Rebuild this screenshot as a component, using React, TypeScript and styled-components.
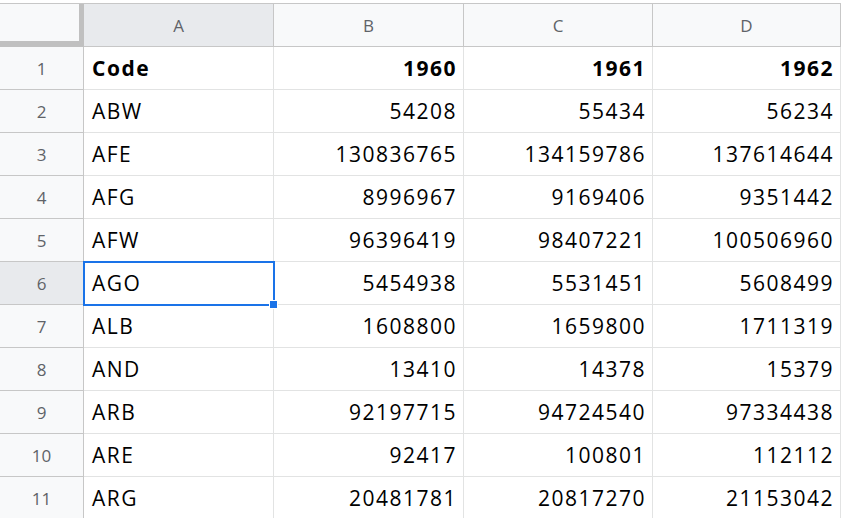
import React from "react";
import styled, { createGlobalStyle } from "styled-components";

const Global = createGlobalStyle`
  body { margin: 0; background: #fff; font-family: "Open Sans", "Noto Sans", sans-serif; }
`;

const Sheet = styled.div`
  margin-top: 3px;
  display: grid;
  grid-template-columns: 84px 190px 190px 189px 188px;
  grid-auto-rows: 43px;
  grid-template-rows: 43px;
  border-top: 1px solid #c7c7c7;
`;

const Corner = styled.div`
  box-sizing: border-box;
  background: #f8f9fa;
  border-right: 5px solid #c0c0c0;
  border-bottom: 6px solid #c0c0c0;
`;

const ColHead = styled.div<{ $sel?: boolean }>`
  box-sizing: border-box;
  background: ${(p) => (p.$sel ? "#e8eaed" : "#f8f9fa")};
  border-right: 1px solid #c7c7c7;
  border-bottom: 1px solid #c7c7c7;
  display: flex;
  align-items: center;
  justify-content: center;
  color: #5f6368;
  font-size: 17px;
`;

const RowHead = styled.div<{ $sel?: boolean }>`
  box-sizing: border-box;
  background: ${(p) => (p.$sel ? "#e8eaed" : "#f8f9fa")};
  border-right: 1px solid #c7c7c7;
  border-bottom: 1px solid #c7c7c7;
  display: flex;
  align-items: center;
  justify-content: center;
  color: #5f6368;
  font-size: 17px;
`;

const Cell = styled.div<{ $num?: boolean; $bold?: boolean; $sel?: boolean }>`
  position: relative;
  box-sizing: border-box;
  border-right: 1px solid #e2e3e3;
  border-bottom: 1px solid #e2e3e3;
  display: flex;
  align-items: center;
  justify-content: ${(p) => (p.$num ? "flex-end" : "flex-start")};
  padding: 0 ${(p) => (p.$num ? "6px" : "0")} 0 ${(p) => (p.$num ? "0" : "8px")};
  font-size: 21px;
  letter-spacing: 1.5px;
  color: #000;
  font-weight: ${(p) => (p.$bold ? 700 : 400)};
  ${(p) => (p.$sel ? "outline: 2px solid #1a73e8; outline-offset: -1px; z-index: 1;" : "")}
`;

const Handle = styled.span`
  position: absolute;
  right: -5px;
  bottom: -5px;
  width: 7px;
  height: 7px;
  background: #1a73e8;
  border: 1px solid #fff;
`;

const rows: [string, string, string, string][] = [
  ["Code", "1960", "1961", "1962"],
  ["ABW", "54208", "55434", "56234"],
  ["AFE", "130836765", "134159786", "137614644"],
  ["AFG", "8996967", "9169406", "9351442"],
  ["AFW", "96396419", "98407221", "100506960"],
  ["AGO", "5454938", "5531451", "5608499"],
  ["ALB", "1608800", "1659800", "1711319"],
  ["AND", "13410", "14378", "15379"],
  ["ARB", "92197715", "94724540", "97334438"],
  ["ARE", "92417", "100801", "112112"],
  ["ARG", "20481781", "20817270", "21153042"],
];

export default function App() {
  return (
    <>
      <Global />
      <Sheet>
        <Corner />
        <ColHead $sel>A</ColHead>
        <ColHead>B</ColHead>
        <ColHead>C</ColHead>
        <ColHead>D</ColHead>
        {rows.map((r, i) => (
          <React.Fragment key={i}>
            <RowHead $sel={i === 5}>{i + 1}</RowHead>
            <Cell $bold={i === 0} $sel={i === 5}>
              {r[0]}
              {i === 5 && <Handle />}
            </Cell>
            {r.slice(1).map((v, j) => (
              <Cell key={j} $num $bold={i === 0}>{v}</Cell>
            ))}
          </React.Fragment>
        ))}
      </Sheet>
    </>
  );
}
